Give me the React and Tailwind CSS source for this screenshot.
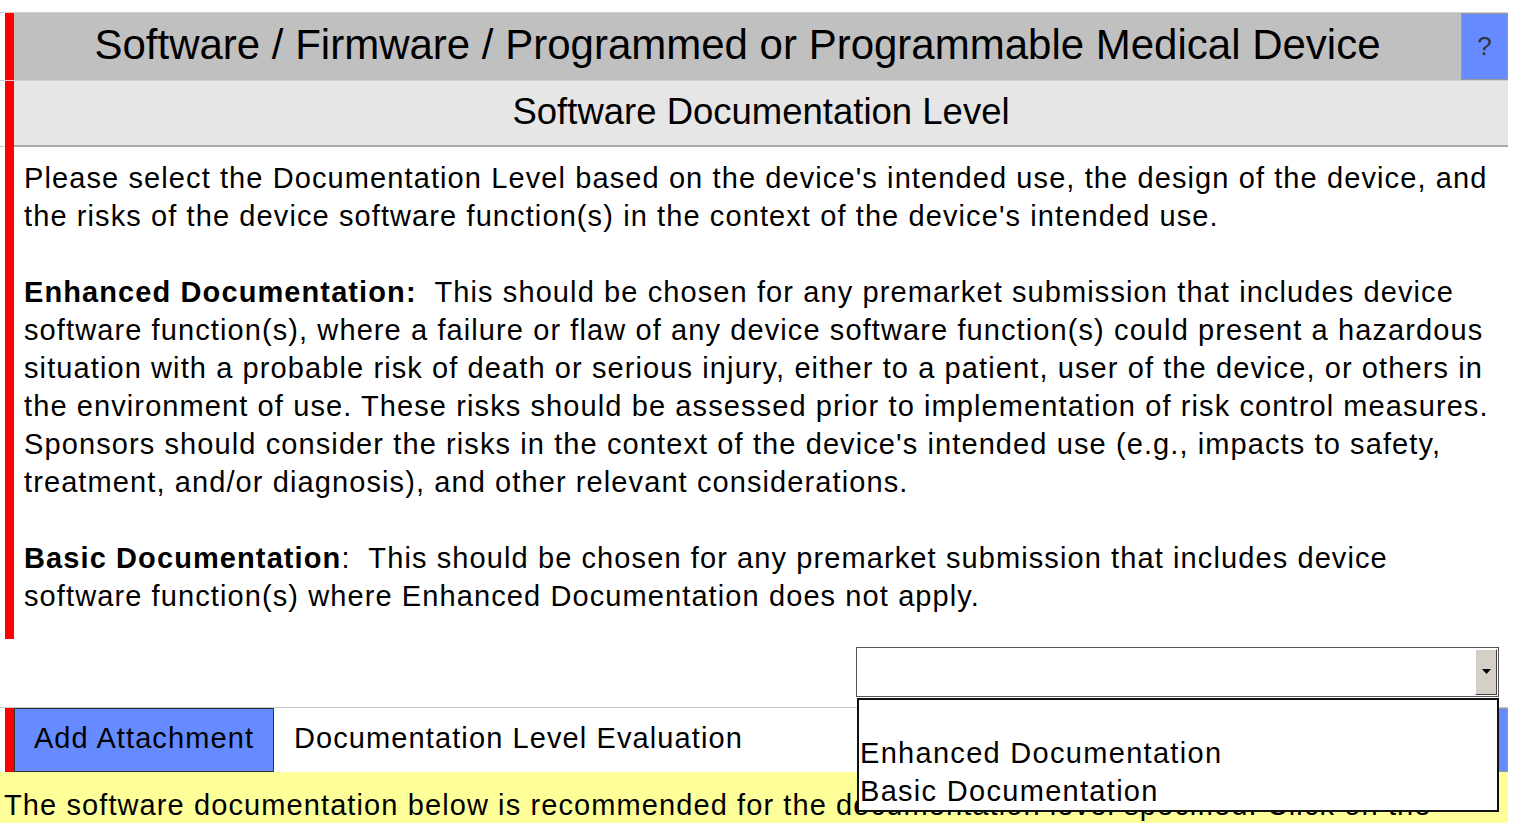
import { useState } from 'react';

const options = ['', 'Enhanced Documentation', 'Basic Documentation'];

function LevelSelect() {
  const [value, setValue] = useState('');

  return (
    <div className="relative ml-[856px] w-[643px]">
      <div className="flex h-[50px] items-center border border-[#555] bg-white">
        <span className="flex-1 pl-[4px] text-[29px] tracking-[1.2px]">{value}</span>
        <div className="mr-[1px] flex h-[46px] w-[22px] items-center justify-center border border-t-white border-l-white border-r-[#444] border-b-[#444] bg-[#d4d0c8]">
          <svg width="9" height="6" viewBox="0 0 9 6">
            <path d="M0 0h9L4.5 5z" fill="#000" />
          </svg>
        </div>
      </div>
      <ul className="absolute left-[1px] top-[51px] z-10 w-[642px] border-2 border-[#111] bg-white text-[29px] leading-[38px] tracking-[1.3px]">
        {options.map((opt, i) => (
          <li
            key={i}
            onClick={() => setValue(opt)}
            className={`pl-[1px] ${i === 0 ? 'h-[34px]' : 'h-[38px]'}`}
          >
            {opt}
          </li>
        ))}
      </ul>
    </div>
  );
}

export default function App() {
  return (
    <div className="min-h-screen bg-white font-['Liberation_Sans',Arial,sans-serif] text-black">
      <div className="w-[1508px] pt-[12px]">
        {/* section header */}
        <div className="flex h-[68px] border-t border-[#d0d0d0]">
          <div className="w-[5px]" />
          <div className="w-[9px] bg-[#ff0000]" />
          <div className="flex flex-1 items-center justify-center bg-[#c0c0c0] pb-[5px] text-[42px]">
            Software / Firmware / Programmed or Programmable Medical Device
          </div>
          <div className="flex w-[47px] items-center justify-center border border-[#999] bg-[#668aff] text-[26px] text-[#333]">
            ?
          </div>
        </div>

        <div className="flex h-[67px] border-t border-[#d0d0d0]">
          <div className="w-[5px] border-b border-[#d0d0d0]" />
          <div className="w-[9px] bg-[#ff0000]" />
          <div className="flex flex-1 items-center justify-center border-b-2 border-[#aaa] bg-[#e6e6e6] pb-[2px] text-[36.5px]">
            Software Documentation Level
          </div>
        </div>

        {/* description */}
        <div className="flex">
          <div className="w-[5px]" />
          <div className="w-[9px] bg-[#ff0000]" />
          <div className="flex-1 pl-[10px] pr-[12px] pt-[12px] pb-[24px] text-[29px] leading-[38px] tracking-[1.1px]">
            <p>
              Please select the Documentation Level based on the device's intended use, the design of the device, and
              the risks of the device software function(s) in the context of the device's intended use.
            </p>
            <p className="mt-[38px]">
              <b>Enhanced Documentation:</b>&nbsp; This should be chosen for any premarket submission that includes device
              software function(s), where a failure or flaw of any device software function(s) could present a hazardous
              situation with a probable risk of death or serious injury, either to a patient, user of the device, or others in
              the environment of use. These risks should be assessed prior to implementation of risk control measures.
              Sponsors should consider the risks in the context of the device's intended use (e.g., impacts to safety,
              treatment, and/or diagnosis), and other relevant considerations.
            </p>
            <p className="mt-[38px]">
              <b>Basic Documentation</b>:&nbsp; This should be chosen for any premarket submission that includes device
              software function(s) where Enhanced Documentation does not apply.
            </p>
          </div>
        </div>

        <div className="h-[68px] pt-[8px]">
          <LevelSelect />
        </div>

        {/* attachment row */}
        <div className="flex h-[65px] border-t border-[#c8c8c8]">
          <div className="w-[5px]" />
          <div className="w-[9px] bg-[#ff0000]" />
          <button className="w-[260px] border border-[#333] bg-[#668aff] pb-[2px] text-[29px] tracking-[1.1px]">
            Add Attachment
          </button>
          <div className="flex flex-1 items-center pb-[2px] pl-[20px] text-[29px] tracking-[1.1px]">
            Documentation Level Evaluation
          </div>
          <div className="w-[47px] border border-[#999] bg-[#668aff]" />
        </div>

        <div className="h-[52px] overflow-hidden whitespace-nowrap bg-[#ffff99] pl-[4px] pt-[14px] text-[29px] leading-[38px] tracking-[1.1px]">
          The software documentation below is recommended for the documentation level specified. Click on the
        </div>
      </div>
    </div>
  );
}
